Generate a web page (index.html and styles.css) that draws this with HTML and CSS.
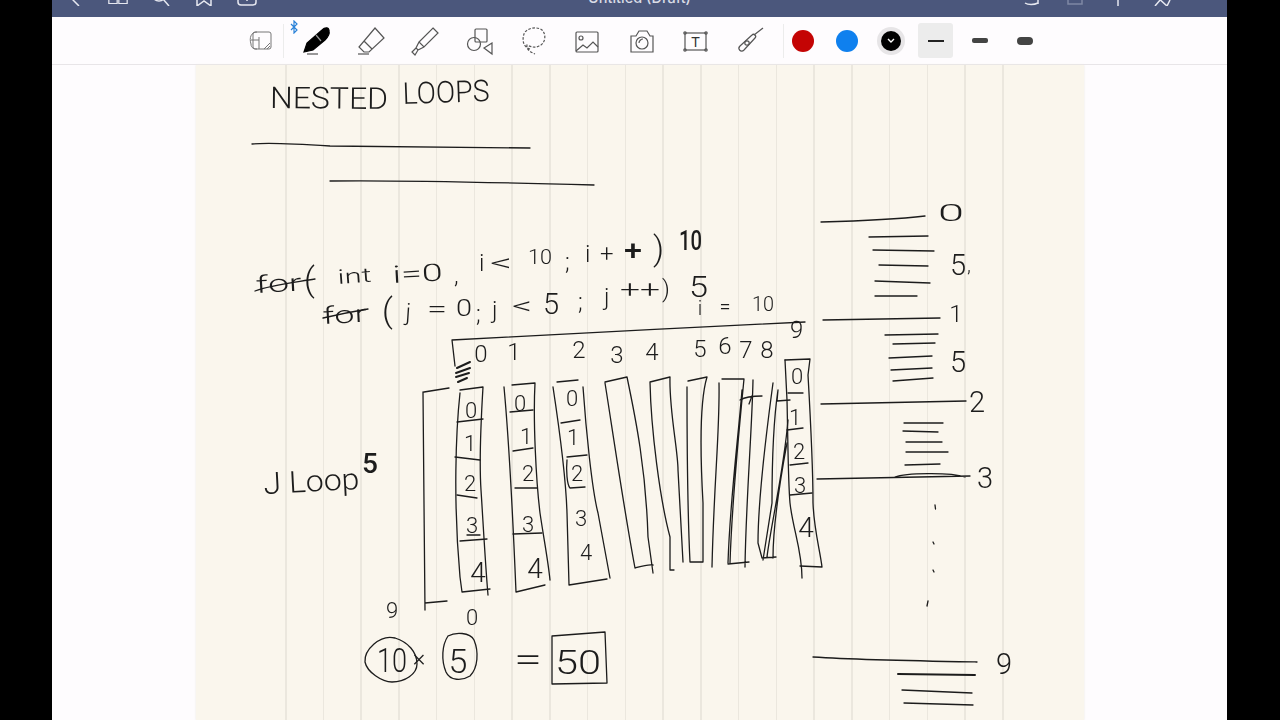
FILE: index.html
```html
<!DOCTYPE html>
<html lang="en">
<head>
<meta charset="utf-8">
<title>Untitled (Draft)</title>
<link rel="stylesheet" href="styles.css">
</head>
<body>
<div class="app">
  <header class="titlebar">
    <div class="bar-group bar-left">
      <svg class="bar-icon" viewBox="0 0 20 20"><path d="M14 6 L8 14 L14 20"/></svg>
      <svg class="bar-icon" viewBox="0 0 24 20"><path d="M1 4 V19 H11 V4 M13 4 V19 H23 V4"/></svg>
      <svg class="bar-icon" viewBox="0 0 20 20"><circle cx="8" cy="8" r="7"/><path d="M12 13 L18 20"/></svg>
      <svg class="bar-icon" viewBox="0 0 20 20"><path d="M3 4 V20 L10 15 L17 20 V4"/></svg>
      <svg class="bar-icon" viewBox="0 0 20 20"><rect x="1" y="2" width="18" height="17" rx="3"/><path d="M10 5 V15"/></svg>
    </div>
    <div class="doc-title">Untitled (Draft)</div>
    <div class="bar-group bar-right">
      <svg class="bar-icon" viewBox="0 0 20 20"><path d="M3 17 C6 19 12 19 16 17 M16 10 V18"/></svg>
      <svg class="bar-icon faint" viewBox="0 0 20 20"><path d="M3 8 V18 H17 V8"/></svg>
      <svg class="bar-icon" viewBox="0 0 20 20"><path d="M10 4 V20 M3 10 H17"/></svg>
      <svg class="bar-icon" viewBox="0 0 20 20"><path d="M4 20 L16 6 M5 10 L16 20 L19 14"/></svg>
    </div>
  </header>

  <nav class="toolbar">
    <svg class="tool tool-doc" viewBox="0 0 24 24"><rect x="5" y="3" width="18" height="17" rx="2"/><path d="M9 3 C3 3 1 9 3 15 C3 19 6 20 9 20 M3 11 H11 M11 8 V20 M16 20 L22 14 M19 20 L22 17"/></svg>
    <span class="sep"></span>
    <div class="tool-slot">
      <svg class="bt" viewBox="0 0 8 14"><path d="M1 4 L7 10 L4 13 V1 L7 4 L1 10"/></svg>
      <svg class="tool" viewBox="0 0 36 36"><path class="solid" d="M6 29 L9 20 L24 7 C27 4 31 4 31 8 C32 11 30 14 27 17 L15 27 Z"/><path class="band" d="M18 12 L23 18"/><path d="M9 31 H20"/></svg>
    </div>
    <div class="tool-slot"><svg class="tool" viewBox="0 0 36 36"><path d="M23 5 L32 15 L17 29 L12 29 L7 24 Z M12 18 L20 26"/><path d="M6 31 H17"/></svg></div>
    <div class="tool-slot"><svg class="tool" viewBox="0 0 36 36"><path d="M26 5 L31 10 L17 24 L12 19 Z M12 19 L9 25 L11 27 L17 24 M9 25 L5 29 L8 32 L11 27"/></svg></div>
    <div class="tool-slot"><svg class="tool" viewBox="0 0 36 36"><rect x="14" y="6" width="12" height="13" rx="1"/><circle cx="13" cy="21" r="6.5"/><path d="M31 20 L23 25 L31 31 Z"/></svg></div>
    <div class="tool-slot"><svg class="tool" viewBox="0 0 36 36"><path class="dashed" d="M15 26 C8 24 7 17 9 11 C11 5 22 3 27 7 C32 12 30 21 24 23 C20 25 16 24 12 22 C11 26 15 29 20 31"/></svg></div>
    <div class="tool-slot"><svg class="tool" viewBox="0 0 36 36"><rect x="7" y="9" width="22" height="20" rx="1"/><circle cx="12" cy="15" r="2"/><path d="M7 28 L14 22 L18 25 L24 19 L29 24"/></svg></div>
    <div class="tool-slot"><svg class="tool" viewBox="0 0 36 36"><path d="M7 13 H12 L15 8 H23 L26 13 H29 V29 H7 Z"/><circle cx="18" cy="20" r="6"/><path d="M15 20 C15 18 17 16 19 16"/></svg></div>
    <div class="tool-slot">
      <svg class="tool" viewBox="0 0 36 36"><rect x="7" y="10" width="21" height="17"/><circle cx="7" cy="10" r="1.2"/><circle cx="28" cy="10" r="1.2"/><circle cx="7" cy="27" r="1.2"/><circle cx="28" cy="27" r="1.2"/><text class="tool-t" x="17.5" y="24">T</text></svg>
    </div>
    <div class="tool-slot"><svg class="tool" viewBox="0 0 36 36"><path d="M8 23 L20 12 C22 10 25 13 23 15 L12 27 C9 30 5 26 8 23 Z"/><circle cx="15" cy="20" r="2.2"/><path d="M22 12 L31 5"/></svg></div>
    <span class="sep sep-right"></span>
    <div class="colors">
      <span class="dot dot-red"></span>
      <span class="dot dot-blue"></span>
      <span class="dot-ring"><span class="dot dot-black"><svg class="chev" viewBox="0 0 8 5"><path d="M1 1 L4 4 L7 1"/></svg></span></span>
    </div>
    <div class="widths">
      <span class="width-slot selected"><span class="nib nib-thin"></span></span>
      <span class="width-slot"><span class="nib nib-mid"></span></span>
      <span class="width-slot"><span class="nib nib-thick"></span></span>
    </div>
  </nav>

  <main class="desk">
    <section class="paper">
      <svg class="ink" viewBox="196 65 888 655">
        <g class="strokes">
          <path d="M252 144 C270 142 300 144 330 146 C400 147 470 147 530 148"/>
          <path d="M330 181 C400 180 520 183 594 185"/>
          <path d="M821 222 C860 221 900 219 925 216"/>
          <path d="M869 237 L928 236 M873 250 L934 251 M879 265 L928 266 M875 281 L930 283 M875 296 L917 296"/>
          <path d="M823 320 L940 318"/>
          <path d="M885 335 L938 334 M893 344 L935 343 M889 358 L932 356 M891 370 L932 368 M893 381 L933 378"/>
          <path d="M821 404 L966 401"/>
          <path d="M904 423 L943 423 M903 431 L938 432 M906 442 L942 442 M906 452 L948 452 M905 465 L940 464"/>
          <path d="M817 479 L970 476 M895 477 C905 473 950 472 965 477"/>
          <path d="M935 505 L935.5 509 M933 542 L934 544 M933 570 L934 572 M928 601 L927 606"/>
          <path d="M813 657 C860 660 920 661 977 662"/>
          <path class="thick" d="M898 674 L975 675"/>
          <path d="M902 690 L972 693 M904 703 L973 705"/>

          <path d="M452 340 C520 336 700 327 805 322 M452 340 L455 366"/>
          <path class="thick" d="M457 368 L470 362 M456 373 L470 368 M456 377 L469 373 M458 382 L467 378"/>
          <path d="M424 392 L449 388 M423 392 C424 450 424 540 425 610 M425 603 L447 601"/>

          <path d="M460 393 C456 430 453 500 460 577 L462 592 L490 589"/>
          <path d="M460 390 L483 387 C481 420 479 460 481 490 C483 520 485 560 488 595"/>
          <path d="M457 422 L483 419 M455 457 L480 460 M457 495 L477 498 M467 535 L480 535 M460 541 L487 539"/>

          <path d="M504 387 C508 430 513 520 516 592 L545 585"/>
          <path d="M512 385 L535 383 C533 420 536 480 540 513 C544 540 548 560 550 580"/>
          <path d="M510 412 L533 410 M513 451 L533 448 M515 488 L537 488 M513 534 L542 533"/>

          <path d="M553 387 C558 420 566 480 567 513 L569 585 L607 579"/>
          <path d="M557 382 L578 380 M583 387 C586 430 592 490 598 513 L610 578"/>
          <path d="M561 423 L580 420 M567 457 L587 455 M570 488 L585 487 M567 460 C566 470 567 485 570 488"/>

          <path d="M605 383 C611 420 624 510 635 568 C642 566 648 564 653 565 M627 377 C636 420 646 470 648 537 L653 573 M605 382 L627 377"/>
          <path d="M650 382 C651 430 660 500 670 537 L670 570 L674 570 M650 382 L670 377 C669 410 678 450 678 470 L683 562"/>
          <path d="M687 387 C687 440 687 500 690 562 L703 562 M688 381 L707 377 C700 400 700 450 703 503 L703 562 M719 383 C720 430 714 480 712 567"/>
          <path d="M722 379 L744 379 C740 420 732 500 730 563 M742 390 C738 440 730 500 728 563 M753 380 C752 430 746 500 745 567 M728 564 L749 562"/>
          <path d="M740 400 C745 397 755 396 762 396 M752 396 L749 404"/>
          <path d="M773 383 C768 420 758 500 758 543 L762 558 M778 390 C772 430 772 490 772 503 L763 560 M788 420 C784 470 770 530 767 557 M787 443 C782 470 773 520 773 558 M762 558 L776 557 M778 390 L777 401 L790 400"/>

          <path d="M785 360 L787 400 C788 440 788 480 790 503 C793 530 802 550 802 578"/>
          <path d="M785 360 L810 359 L808 375 C810 410 813 470 813 503 C814 530 820 550 822 567 L800 566"/>
          <path d="M788 393 L803 393 M787 430 L803 428 M790 465 L808 463 M790 495 L812 493"/>

          <path d="M395 638 C380 634 364 650 365 662 C367 672 382 682 392 682 C405 682 417 674 417 664 C417 652 408 642 395 638"/>
          <path d="M448 636 C455 632 470 632 474 640 C479 652 478 668 470 676 C462 681 450 681 446 672 C441 660 442 645 448 636"/>
          <path d="M552 636 L605 632 L607 683 L552 684 Z"/>
          <path d="M255 291 C270 285 290 283 315 279"/>
          <path d="M323 318 C340 314 350 312 368 309"/>
        </g>

        <g class="hand">
          <text class="t-title" x="270" y="108" textLength="118" lengthAdjust="spacingAndGlyphs" transform="rotate(0.5 270 108)">NESTED</text>
          <text class="t-title" x="403" y="104" textLength="87" lengthAdjust="spacingAndGlyphs" transform="rotate(-2 403 104)">LOOPS</text>

          <text class="t-line" x="256" y="293" textLength="46" lengthAdjust="spacingAndGlyphs" transform="rotate(-3 256 293)">for</text>
          <text class="t-big" x="304" y="291">(</text>
          <text class="t-sm" x="338" y="284" textLength="34" lengthAdjust="spacingAndGlyphs" transform="rotate(-4 338 284)">int</text>
          <text class="t-line" x="393" y="283" textLength="50" lengthAdjust="spacingAndGlyphs" transform="rotate(-3 393 283)">i=0</text>
          <text class="t-line" x="454" y="283">,</text>
          <text class="t-line" x="479" y="271">i</text>
          <text class="t-line" x="490" y="271" textLength="22" lengthAdjust="spacingAndGlyphs">&lt;</text>
          <text class="t-sm" x="528" y="264" textLength="24" lengthAdjust="spacingAndGlyphs">10</text>
          <text class="t-line" x="565" y="270">;</text>
          <text class="t-line" x="585" y="262">i</text>
          <text class="t-line" x="600" y="262">+</text>
          <text class="t-bold" x="624" y="260" textLength="18" lengthAdjust="spacingAndGlyphs">+</text>
          <text class="t-big" x="653" y="260">)</text>
          <text class="t-bold" x="679" y="250" textLength="23" lengthAdjust="spacingAndGlyphs">10</text>

          <text class="t-line" x="323" y="324" textLength="44" lengthAdjust="spacingAndGlyphs" transform="rotate(-3 323 324)">for</text>
          <text class="t-big" x="382" y="322">(</text>
          <text class="t-line" x="405" y="320" transform="rotate(4 405 320)">j</text>
          <text class="t-line" x="427" y="317" textLength="20" lengthAdjust="spacingAndGlyphs">=</text>
          <text class="t-line" x="456" y="316" textLength="16" lengthAdjust="spacingAndGlyphs">0</text>
          <text class="t-line" x="476" y="322">;</text>
          <text class="t-line" x="492" y="318">j</text>
          <text class="t-line" x="512" y="314" textLength="20" lengthAdjust="spacingAndGlyphs">&lt;</text>
          <text class="t-label" x="543" y="314">5</text>
          <text class="t-line" x="578" y="310">;</text>
          <text class="t-line" x="604" y="305">j</text>
          <text class="t-line" x="620" y="298" textLength="40" lengthAdjust="spacingAndGlyphs">++</text>
          <text class="t-line" x="662" y="297">)</text>
          <text class="t-label" x="689" y="297" textLength="19" lengthAdjust="spacingAndGlyphs">5</text>

          <text class="t-sm mid" x="700" y="315">i</text>
          <text class="t-sm mid" x="725" y="313">=</text>
          <text class="t-sm mid" x="763" y="311" textLength="22" lengthAdjust="spacingAndGlyphs">10</text>

          <text class="t-digit mid" x="481" y="362">0</text>
          <text class="t-digit mid" x="514" y="360">1</text>
          <text class="t-digit mid" x="579" y="358">2</text>
          <text class="t-digit mid" x="617" y="363">3</text>
          <text class="t-digit mid" x="652" y="360">4</text>
          <text class="t-digit mid" x="700" y="357">5</text>
          <text class="t-digit mid" x="725" y="354">6</text>
          <text class="t-digit mid" x="746" y="358">7</text>
          <text class="t-digit mid" x="767" y="358">8</text>
          <text class="t-digit mid" x="796" y="338" transform="rotate(4 796 338)">9</text>

          <text class="t-cell mid" x="471" y="418">0</text>
          <text class="t-cell mid" x="470" y="451">1</text>
          <text class="t-cell mid" x="470" y="491">2</text>
          <text class="t-cell mid" x="472" y="533">3</text>
          <text class="t-tall mid" x="478" y="582">4</text>
          <text class="t-cell mid" x="520" y="411">0</text>
          <text class="t-cell mid" x="526" y="444">1</text>
          <text class="t-cell mid" x="528" y="481">2</text>
          <text class="t-cell mid" x="528" y="532">3</text>
          <text class="t-tall mid" x="535" y="578">4</text>
          <text class="t-cell mid" x="572" y="406">0</text>
          <text class="t-cell mid" x="573" y="445">1</text>
          <text class="t-cell mid" x="577" y="481">2</text>
          <text class="t-cell mid" x="581" y="526">3</text>
          <text class="t-cell mid" x="586" y="560">4</text>
          <text class="t-cell mid" x="797" y="384">0</text>
          <text class="t-cell mid" x="795" y="425">1</text>
          <text class="t-cell mid" x="799" y="459">2</text>
          <text class="t-cell mid" x="800" y="493">3</text>
          <text class="t-tall mid" x="806" y="537">4</text>

          <text class="t-line mid" x="951" y="221" textLength="26" lengthAdjust="spacingAndGlyphs">0</text>
          <text class="t-label mid" x="958" y="275">5</text>
          <text class="t-sm mid" x="969" y="272">,</text>
          <text class="t-line mid" x="956" y="322">1</text>
          <text class="t-label mid" x="958" y="372">5</text>
          <text class="t-label mid" x="977" y="412">2</text>
          <text class="t-label mid" x="985" y="488">3</text>
          <text class="t-label mid" x="1004" y="674">9</text>

          <text class="t-loop" x="264" y="494" textLength="96" lengthAdjust="spacingAndGlyphs" transform="rotate(-3 264 494)">J Loop</text>
          <text class="t-bold mid" x="370" y="473">5</text>

          <text class="t-bigger mid" x="392" y="672" textLength="30" lengthAdjust="spacingAndGlyphs">10</text>
          <text class="t-line mid" x="419" y="666">×</text>
          <text class="t-bigger mid" x="458" y="673">5</text>
          <text class="t-bigger mid" x="528" y="671" textLength="28" lengthAdjust="spacingAndGlyphs">=</text>
          <text class="t-bigger mid" x="578" y="674" textLength="46" lengthAdjust="spacingAndGlyphs">50</text>
          <text class="t-cell mid" x="392" y="618">9</text>
          <text class="t-cell mid" x="472" y="625">0</text>
        </g>
      </svg>
    </section>
  </main>
</div>
</body>
</html>
```

FILE: styles.css
```css
html, body {
  margin: 0;
  height: 100%;
  background: #000;
  overflow: hidden;
}

.app {
  width: 1175px;
  height: 720px;
  margin-left: 52px;
  display: flex;
  flex-direction: column;
  font-family: "Inter", "Liberation Sans", sans-serif;
}

.titlebar {
  height: 17px;
  flex: none;
  box-sizing: border-box;
  padding-bottom: 11px;
  display: grid;
  grid-template-columns: 1fr auto 1fr;
  align-items: end;
  align-content: end;
  background: #4b577c;
  overflow: hidden;
}

.bar-group {
  display: flex;
  align-items: flex-end;
  gap: 23px;
}

.bar-left {
  padding-left: 13px;
}

.bar-right {
  justify-content: flex-end;
  padding-right: 56px;
}

.bar-icon {
  width: 20px;
  height: 20px;
  flex: none;
  fill: none;
  stroke: #e6e8f0;
  stroke-width: 1.5;
}

.bar-icon.faint {
  stroke: #7f88a4;
}

.doc-title {
  color: #d9dce6;
  font-size: 14.5px;
  font-weight: 500;
  line-height: 18px;
  margin-bottom: -1px;
}

.toolbar {
  height: 48px;
  flex: none;
  box-sizing: border-box;
  display: flex;
  align-items: center;
  padding-left: 196px;
  background: #fefcfe;
  border-bottom: 1px solid #e8e5e8;
}

.sep {
  width: 1px;
  height: 34px;
  background: #ececec;
  margin: 0 5px 0 11px;
  flex: none;
}

.sep-right {
  margin: 0 8px 0 6px;
}

.tool-slot {
  position: relative;
  width: 54.25px;
  height: 36px;
  display: flex;
  justify-content: center;
  flex: none;
}

.tool {
  width: 36px;
  height: 36px;
  flex: none;
  fill: none;
  stroke: #555;
  stroke-width: 1.2;
}

.tool-doc {
  width: 24px;
  height: 24px;
  stroke: #777;
  stroke-width: 1;
}

.tool .solid {
  fill: #000;
  stroke: #000;
}

.tool .band {
  stroke: #999;
}

.tool .dashed {
  stroke-dasharray: 2.6 1.5;
}

.tool-t {
  fill: #333;
  stroke: none;
  font-size: 14px;
  text-anchor: middle;
  font-family: "Liberation Sans", sans-serif;
}

.bt {
  position: absolute;
  left: 1px;
  top: -3px;
  width: 8px;
  height: 14px;
  fill: none;
  stroke: #2a82d8;
  stroke-width: 1.2;
}

.colors {
  display: flex;
  align-items: center;
  gap: 22px;
  flex: none;
}

.dot {
  display: block;
  width: 22px;
  height: 22px;
  border-radius: 50%;
}

.dot-red {
  background: #c40404;
}

.dot-blue {
  background: #0f80ee;
}

.dot-black {
  width: 20px;
  height: 20px;
  background: #000;
  display: flex;
  align-items: center;
  justify-content: center;
}

.dot-ring {
  width: 28px;
  height: 28px;
  border-radius: 50%;
  background: #e7e5e7;
  display: flex;
  align-items: center;
  justify-content: center;
  margin-left: -3px;
}

.chev {
  width: 8px;
  height: 5px;
  fill: none;
  stroke: #fff;
  stroke-width: 1.4;
}

.widths {
  display: flex;
  align-items: center;
  gap: 9.5px;
  margin-left: 13px;
  flex: none;
}

.width-slot {
  width: 35px;
  height: 35px;
  display: flex;
  align-items: center;
  justify-content: center;
  border-radius: 3px;
}

.width-slot.selected {
  background: #ececec;
}

.nib {
  width: 16px;
  background: #333;
  display: block;
}

.nib-thin {
  height: 2px;
  background: #222;
}

.nib-mid {
  height: 5px;
  border-radius: 2px;
  background: #444;
}

.nib-thick {
  height: 8px;
  border-radius: 4px;
  background: #444;
}

.desk {
  flex: 1;
  min-height: 0;
  display: flex;
  justify-content: center;
  background: #fefcfe;
}

.paper {
  width: 888px;
  height: 655px;
  background-color: #faf6ed;
  background-image: repeating-linear-gradient(90deg, #ebe7de 0, #ebe7de 1.5px, transparent 1.5px, transparent 37.74px);
  background-position: 89px 0;
  background-size: 719px 100%;
  background-repeat: no-repeat;
  box-shadow: 0 0 2px #ece9e4;
}

.ink {
  display: block;
  width: 888px;
  height: 655px;
  filter: blur(0.3px);
}

.strokes {
  fill: none;
  stroke: #1c1c1c;
  stroke-width: 1.3;
  stroke-linecap: round;
  stroke-linejoin: round;
}

.strokes .thick {
  stroke-width: 2;
}

.hand {
  fill: #1c1c1c;
  font-family: "Roboto", "Liberation Sans", sans-serif;
  font-weight: 300;
}

.mid {
  text-anchor: middle;
}

.t-title { font-size: 30px; }
.t-line { font-size: 24px; }
.t-label { font-size: 29px; }
.t-loop { font-size: 30px; }
.t-sm { font-size: 20px; }
.t-big { font-size: 34px; }
.t-bigger { font-size: 34px; }
.t-digit { font-size: 24px; }
.t-cell { font-size: 22px; }
.t-tall { font-size: 28px; }
.t-bold { font-size: 28px; font-weight: 500; }
```
